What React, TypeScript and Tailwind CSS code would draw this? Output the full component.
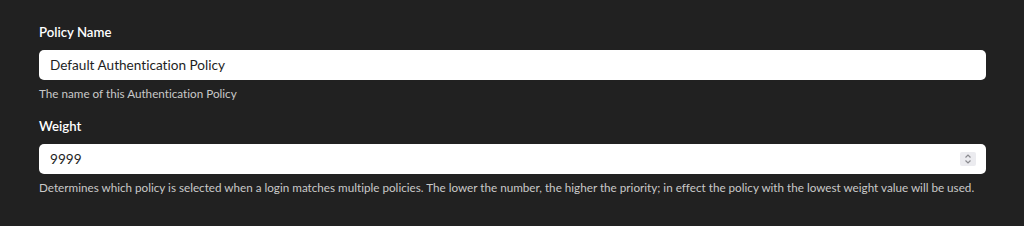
import React from 'react'

/**
 * Authentication policy form fields
 */
const Spinner: React.FC = () => (
  <div className="flex h-[14px] w-[16px] flex-col items-center justify-center rounded-[2px] bg-[#ebebef]">
    <svg width="8" height="12" viewBox="0 0 8 12" fill="none" stroke="#8a8a8f" strokeWidth="1.2">
      <path d="M1.5 4.5 L4 2 L6.5 4.5" />
      <path d="M1.5 7.5 L4 10 L6.5 7.5" />
    </svg>
  </div>
)

export default function App() {
  return (
    <div className="min-h-[226px] bg-[#212121] px-[39px] pt-[23px] font-['Lato','Noto_Sans',sans-serif] text-white [font-variant-ligatures:none]">
      {/* Policy name */}
      <div className="flex flex-col">
        <label className="mb-[9px] text-[13.2px] font-semibold leading-[18px] text-white">Policy Name</label>
        <div className="flex h-[30px] w-[947px] items-center rounded-[5px] bg-white pl-[11px]">
          <input
            type="text"
            defaultValue="Default Authentication Policy"
            className="w-full bg-transparent text-[13.6px] text-[#1e1e1e] outline-none [font-variant-ligatures:none]"
          />
        </div>
        <p className="mt-[6px] text-[11.7px] leading-[14px] text-[#c9c9c9]">The name of this Authentication Policy</p>
      </div>

      {/* Weight */}
      <div className="mt-[17px] flex flex-col">
        <label className="mb-[9px] text-[13.2px] font-semibold leading-[18px] text-white">Weight</label>
        <div className="flex h-[30px] w-[947px] items-center rounded-[5px] bg-white pl-[11px] pr-[10px]">
          <input
            type="text"
            defaultValue="9999"
            className="w-full bg-transparent text-[13.6px] text-[#1e1e1e] outline-none"
          />
          <Spinner />
        </div>
        <p className="mt-[6px] text-[11.7px] leading-[14px] text-[#c9c9c9]">
          Determines which policy is selected when a login matches multiple policies. The lower the number, the higher the priority; in effect the policy with the lowest weight value will be used.
        </p>
      </div>
    </div>
  )
}
